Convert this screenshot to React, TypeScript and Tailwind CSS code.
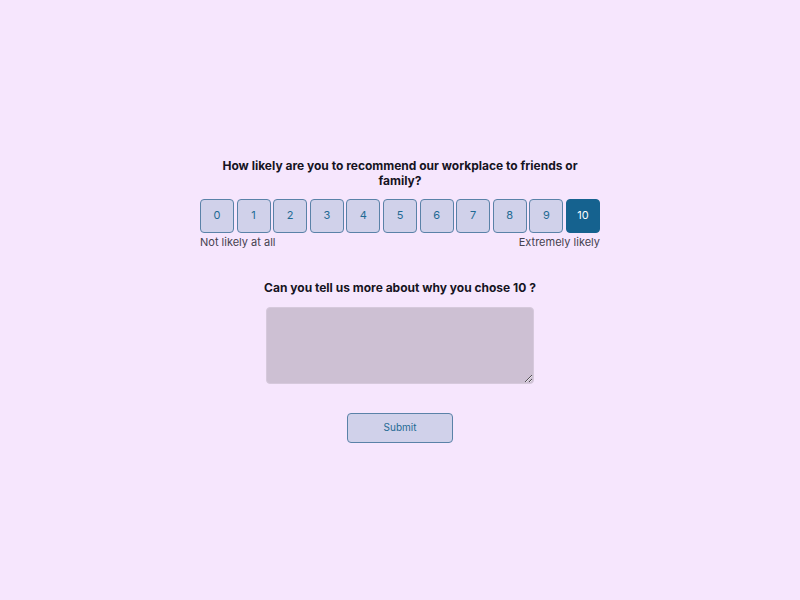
import React, { useState } from "react";

const App = () => {
  const [score, setScore] = useState(10);
  const scores = [0, 1, 2, 3, 4, 5, 6, 7, 8, 9, 10];

  return (
    <div
      className="min-h-screen w-full bg-[#f6e6fd] flex items-center justify-center"
      style={{ fontFamily: "Inter, 'Noto Sans', sans-serif" }}
    >
      <div className="flex flex-col items-center">
        {/* NPS question */}
        <h2 className="w-[380px] text-center text-[12px] leading-[15px] font-bold text-[#16141f]">
          How likely are you to recommend our workplace to friends or family?
        </h2>

        <div className="mt-[11px] w-[400px] flex gap-[2.6px]">
          {scores.map((s) => (
            <button
              key={s}
              onClick={() => setScore(s)}
              className={
                s === score
                  ? "flex-1 h-[34px] rounded-[4px] border border-[#15628f] bg-[#15628f] text-white text-[11px] flex items-center justify-center"
                  : "flex-1 h-[34px] rounded-[4px] border border-[#5a82a8] bg-[#d0d1ea] text-[#1f6a93] text-[11px] flex items-center justify-center"
              }
            >
              {s}
            </button>
          ))}
        </div>
        <div className="w-[400px] flex justify-between text-[11px] leading-[14px] text-[#45424f] mt-[2px]">
          <span>Not likely at all</span>
          <span>Extremely likely</span>
        </div>

        {/* follow-up */}
        <h3 className="mt-[31px] text-[12px] leading-[15px] font-bold text-[#16141f]">
          Can you tell us more about why you chose {score} ?
        </h3>
        <textarea className="mt-[12px] w-[268px] h-[77px] rounded-[4px] bg-[#cdc0d3] border border-[#d6c9dc] outline-none" />

        <button className="mt-[29px] w-[106px] h-[30px] rounded-[4px] border border-[#5a82a8] bg-[#d0d1ea] text-[#1f6a93] text-[10px]">
          Submit
        </button>
      </div>
    </div>
  );
};

export default App;
